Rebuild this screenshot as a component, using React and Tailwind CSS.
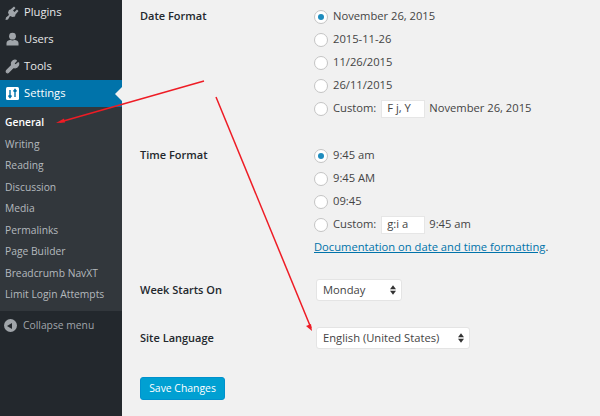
import { Wrench } from 'lucide-react';

const submenu = ['Writing', 'Reading', 'Discussion', 'Media', 'Permalinks', 'Page Builder', 'Breadcrumb NavXT', 'Limit Login Attempts'];

function MenuItem({ icon, label, active }) {
  return (
    <div className={`relative flex h-[27px] items-center gap-[4px] pl-[4px] text-[11.2px] ${active ? 'bg-[#0073aa] text-white' : 'text-[#e6e7e8]'}`}>
      <span className="flex w-[16px] justify-center">{icon}</span>
      <span>{label}</span>
      {active && <span className="absolute right-0 top-[7px] h-0 w-0 border-y-[7px] border-r-[7px] border-y-transparent border-r-[#f1f1f1]" />}
    </div>
  );
}

function Radio({ checked }) {
  return (
    <span className="flex h-[14px] w-[14px] shrink-0 items-center justify-center rounded-full border border-[#c4c4c4] bg-white">
      {checked && <span className="h-[6px] w-[6px] rounded-full bg-[#1e8cbe]" />}
    </span>
  );
}

function Option({ checked, children }) {
  return (
    <div className="flex h-[23px] items-center gap-[5px] text-[11.2px] text-[#444]">
      <Radio checked={checked} />
      {children}
    </div>
  );
}

function Custom({ value, sample }) {
  return (
    <Option>
      <span>Custom:</span>
      <span className="flex h-[18px] w-[44px] items-center border border-[#e6e6e6] bg-white pl-[5px] text-[#444]">{value}</span>
      <span className="ml-[-1px]">{sample}</span>
    </Option>
  );
}

function SelectBox({ label, width }) {
  return (
    <div className={`flex h-[22px] items-center justify-between whitespace-nowrap rounded-[3px] border border-[#e4e4e4] bg-white pl-[6px] pr-[5px] text-[11.2px] text-[#444] ${width}`}>
      <span>{label}</span>
      <svg width="6" height="10" viewBox="0 0 7 11" fill="#333">
        <path d="M3.5 0L7 4.5H0zM3.5 11L0 6.5H7z" />
      </svg>
    </div>
  );
}

export default function App() {
  return (
    <div className="relative flex h-[416px] w-[600px] overflow-hidden bg-[#f1f1f1] font-['Open_Sans',sans-serif]">
      <aside className="flex w-[122px] shrink-0 flex-col bg-[#23282d]">
        <div className="mt-[-1px]">
          <MenuItem
            label="Plugins"
            icon={
              <svg width="16" height="16" viewBox="0 0 16 16" fill="#a0a5aa">
                <path d="M10 1.5L11.5 3L9 5.5L10.5 7L13 4.5L14.5 6L11.5 9.5L11 11.5L8.5 12L6 11L4 14.5L1.5 15L2 12.5L5 10L4 7.5L5 5L6.5 4.5z" />
              </svg>
            }
          />
          <MenuItem
            label="Users"
            icon={
              <svg width="15" height="15" viewBox="0 0 15 15" fill="#a0a5aa">
                <circle cx="7.5" cy="4.2" r="3.4" />
                <path d="M1.5 13.5V11C1.5 9.2 3.5 8.2 5.5 7.8C6.5 8.6 8.5 8.6 9.5 7.8C11.5 8.2 13.5 9.2 13.5 11V13.5z" />
              </svg>
            }
          />
          <MenuItem icon={<Wrench size={15} fill="#a0a5aa" color="#a0a5aa" />} label="Tools" />
          <MenuItem
            active
            label="Settings"
            icon={
              <svg width="13" height="13" viewBox="0 0 13 13">
                <rect width="13" height="13" rx="1.5" fill="#fff" />
                <path d="M4 3v7M2.5 8.5L4 10.5l1.5-2M9 10V3M7.5 4.5L9 2.5l1.5 2" stroke="#0073aa" strokeWidth="1.4" fill="none" />
              </svg>
            }
          />
        </div>
        <div className="flex h-[204px] flex-col bg-[#32373c] pl-[5px] pt-[5px] text-[10.3px] leading-[21.5px] text-[#b4b9be]">
          <div className="font-semibold text-white">General</div>
          {submenu.map((item) => (
            <div key={item}>{item}</div>
          ))}
        </div>
        <div className="mt-[1px] flex h-[27px] items-center gap-[6px] pl-[4px] text-[10.3px] text-[#a0a5aa]">
          <span className="flex h-[13px] w-[13px] items-center justify-center rounded-full bg-[#a0a5aa]">
            <span className="ml-[-2px] h-0 w-0 border-y-[3.5px] border-r-[5px] border-y-transparent border-r-[#23282d]" />
          </span>
          Collapse menu
        </div>
      </aside>

      <main className="flex-1 pl-[18px] pt-[5px]">
        <div className="flex">
          <div className="w-[174px] pt-[3px] text-[11px] font-semibold text-[#23282d]">Date Format</div>
          <div>
            <Option checked>November 26, 2015</Option>
            <Option>2015-11-26</Option>
            <Option>11/26/2015</Option>
            <Option>26/11/2015</Option>
            <Custom value="F j, Y" sample="November 26, 2015" />
          </div>
        </div>
        <div className="mt-[24px] flex">
          <div className="w-[174px] pt-[3px] text-[11px] font-semibold text-[#23282d]">Time Format</div>
          <div>
            <Option checked>9:45 am</Option>
            <Option>9:45 AM</Option>
            <Option>09:45</Option>
            <Custom value="g:i a" sample="9:45 am" />
            <div className="mt-[1px] text-[11.2px] leading-[20px] text-[#444]">
              <span className="text-[#0073aa] underline">Documentation on date and time formatting</span>.
            </div>
          </div>
        </div>
        <div className="mt-[22px] flex items-center">
          <div className="w-[176px] text-[11px] font-semibold text-[#23282d]">Week Starts On</div>
          <SelectBox label="Monday" width="w-[86px]" />
        </div>
        <div className="mt-[26px] flex items-center">
          <div className="w-[176px] text-[11px] font-semibold text-[#23282d]">Site Language</div>
          <SelectBox label="English (United States)" width="w-[154px]" />
        </div>
        <button className="mt-[28px] flex h-[23px] w-[85px] items-center justify-center rounded-[3px] border border-[#0091cd] bg-[#00a0d2] text-[10.4px] text-white">
          Save Changes
        </button>
      </main>

      <svg className="pointer-events-none absolute left-0 top-0" width="600" height="416" fill="none">
        <path d="M204 81L60 122" stroke="#ee1c25" strokeWidth="1.5" />
        <path d="M56 123L64 118.5L65 122.5z" fill="#ee1c25" />
        <path d="M216 97L311 328" stroke="#ee1c25" strokeWidth="1.5" />
        <path d="M312 331L306 326L311 324z" fill="#ee1c25" />
      </svg>
    </div>
  );
}
